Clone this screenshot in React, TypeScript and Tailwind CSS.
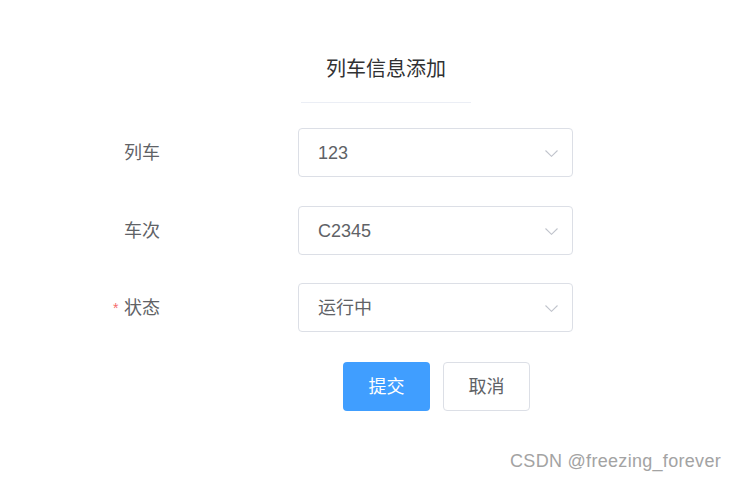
const cjk = { fontFamily: '"Liberation Sans", "Noto Sans CJK SC", sans-serif' };

const Chevron = () => (
  <svg width="13" height="7" viewBox="0 0 13 7" fill="none" className="shrink-0">
    <path d="M0.5 0.5 L6.5 6.3 L12.5 0.5" stroke="#c0c4cc" strokeWidth="1.1" />
  </svg>
);

const fields = [
  { label: "列车", value: "123" },
  { label: "车次", value: "C2345" },
  { label: "状态", value: "运行中", required: true },
];

export default function App() {
  return (
    <div className="relative w-[736px] h-[481px] bg-white overflow-hidden" style={cjk}>
      <div className="ml-[100px] w-[572px] pt-[54px]">
        <h2 className="text-center text-[20px] leading-[30px] text-[#303133] font-normal">列车信息添加</h2>
        <div className="mx-auto mt-[18px] h-px w-[170px] bg-[#ebeef5]" />

        <div className="mt-[25px] flex flex-col gap-[28.5px]">
          {fields.map((f) => (
            <div key={f.label} className="flex items-center h-[49px]">
              <div className="w-[198px] pl-[24px] pt-[2px] flex items-center text-[18px] text-[#606266]">
                {f.required && (
                  <span className="-ml-[11px] w-[11px] text-[14px] text-[#f56c6c]">*</span>
                )}
                <span>{f.label}</span>
              </div>
              <div className="w-[275px] h-[49px] flex items-center justify-between pl-[19px] pr-[14px] pt-[2px] border border-[#dcdfe6] rounded-[4px] text-[18px] text-[#606266]">
                <span>{f.value}</span>
                <Chevron />
              </div>
            </div>
          ))}
        </div>

        <div className="mt-[30px] ml-[199px] w-[275px] flex justify-center gap-[13px]">
          <button className="w-[87px] h-[49px] pt-[1px] rounded-[4px] bg-[#409eff] text-white text-[18px]">提交</button>
          <button className="w-[87px] h-[49px] pt-[1px] rounded-[4px] border border-[#dcdfe6] bg-white text-[#606266] text-[18px]">取消</button>
        </div>
      </div>

      <div className="absolute right-[15px] top-[451px] text-[18px] leading-[20px] tracking-[0.3px] text-[#a3a3a3]">
        CSDN @freezing_forever
      </div>
    </div>
  );
}
